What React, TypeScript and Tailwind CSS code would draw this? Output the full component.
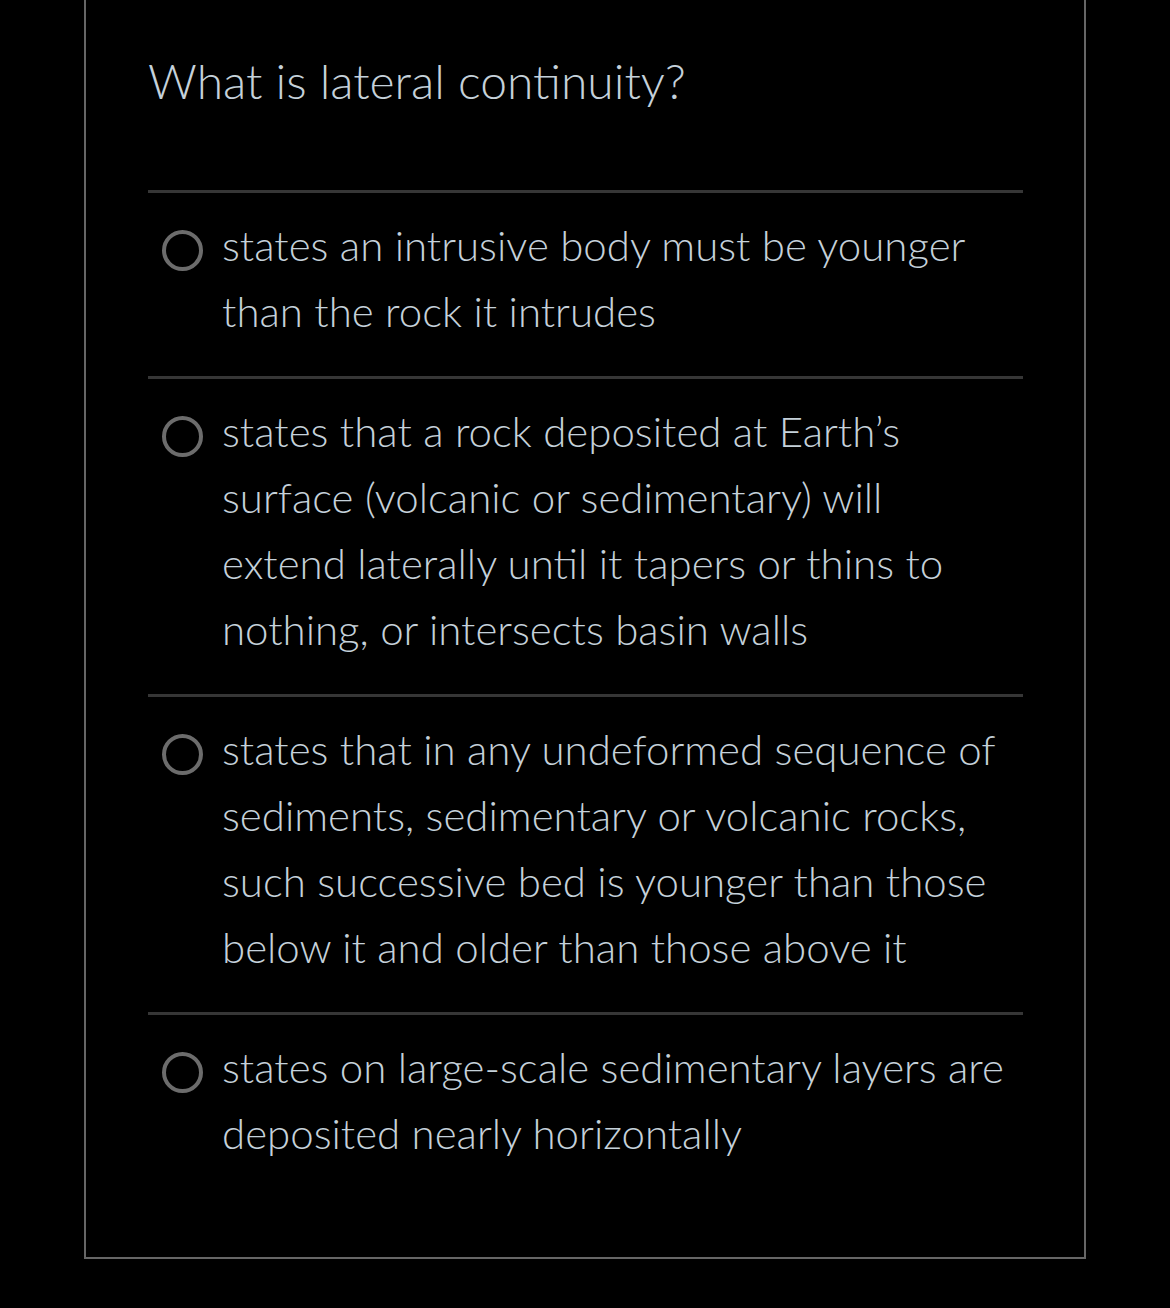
import React from 'react';

const options = [
  'states an intrusive body must be younger than the rock it intrudes',
  'states that a rock deposited at Earth\u2019s surface (volcanic or sedimentary) will extend laterally until it tapers or thins to nothing, or intersects basin walls',
  'states that in any undeformed sequence of sediments, sedimentary or volcanic rocks, such successive bed is younger than those below it and older than those above it',
  'states on large-scale sedimentary layers are deposited nearly horizontally',
];

const Radio = () => (
  <div className="mt-[18px] w-[41px] h-[41px] shrink-0 rounded-full border-[4px] border-[#6c6c6c]" />
);

export default function App() {
  return (
    <div
      className="w-[1170px] h-[1308px] bg-black overflow-hidden"
      style={{ fontFamily: '"Lato Light", Lato, "Open Sans", sans-serif' }}
    >
      <div className="ml-[84px] w-[1002px] h-[1259px] border-x-2 border-b-2 border-[#666666] pl-[62px] pr-[61px]">
        <h1 className="pt-[51px] pb-[79px] text-[48px] leading-[60px] font-light text-[#c5d1da]">
          What is lateral continuity?
        </h1>
        <div>
          {options.map((text, i) => (
            <div
              key={i}
              className="flex gap-[19px] pl-[14px] pr-[8px] pt-[19px] pb-[32px] border-t-[3px] border-[#363636]"
            >
              <Radio />
              <p className="text-[42px] leading-[66px] font-light text-[#c5d1da]">{text}</p>
            </div>
          ))}
        </div>
      </div>
    </div>
  );
}
